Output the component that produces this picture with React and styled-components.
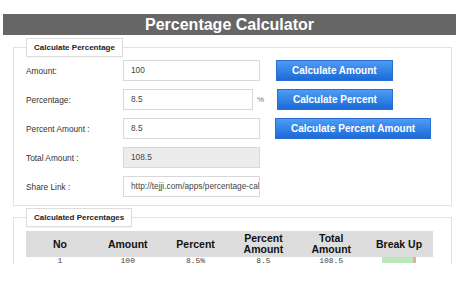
import React from 'react';
import styled, { createGlobalStyle } from 'styled-components';

const GlobalStyle = createGlobalStyle`
  body {
    margin: 0;
    background: #fff;
    font-family: "Liberation Sans", Arial, sans-serif;
  }
`;

const Page = styled.div`
  width: 459px;
  height: 264px;
  overflow: hidden;
  padding-top: 14px;
  box-sizing: border-box;
`;

const TitleBar = styled.h1`
  margin: 0 3px;
  height: 21px;
  background: #666;
  color: #fff;
  font-size: 16px;
  font-weight: bold;
  line-height: 21px;
  text-align: center;
`;

const Box = styled.fieldset`
  margin: ${p => p.$top}px 7px 0 13px;
  padding: 2px 12px ${p => p.$bottom}px;
  border: 1px solid #e2e2e2;
  min-width: 0;
`;

const Legend = styled.legend`
  padding: 0 7px;
  height: 17px;
  line-height: 17px;
  border: 1px solid #ddd;
  background: #fff;
  font-size: 8px;
  font-weight: bold;
  color: #222;
  box-shadow: 0 1px 1px rgba(0, 0, 0, 0.04);
`;

const Form = styled.div`
  display: grid;
  grid-template-columns: 97px 153px auto;
  row-gap: 8px;
  align-items: center;
  padding-top: 1px;
`;

const Label = styled.label`
  font-size: 8.3px;
  color: #333;
`;

const Field = styled.div`
  display: flex;
  align-items: center;
  gap: 4px;
`;

const Input = styled.div`
  box-sizing: border-box;
  width: ${p => p.$width || 137}px;
  height: 21px;
  line-height: 19px;
  padding: 0 7px;
  border: 1px solid #d8d8d8;
  background: ${p => (p.$readOnly ? '#ececec' : '#fff')};
  font-size: 8.3px;
  color: #444;
  white-space: nowrap;
  overflow: hidden;
`;

const Unit = styled.span`
  font-size: 8px;
  color: #777;
`;

const Button = styled.button`
  justify-self: start;
  height: 21px;
  padding: 0 15px;
  border: 1px solid #2a6fd0;
  background: linear-gradient(#4d9cf4, #1b6ad8);
  color: #fff;
  font-family: "Liberation Sans", Arial, sans-serif;
  font-size: 10px;
  font-weight: bold;
  margin-left: ${p => p.$shift || 0}px;
`;

const Table = styled.table`
  width: 407px;
  margin-top: 2px;
  border-collapse: collapse;
  table-layout: fixed;
`;

const Head = styled.th`
  height: 26px;
  padding: 0;
  background: #dddddd;
  font-size: 10.5px;
  font-weight: bold;
  line-height: 11px;
  color: #111;
  text-align: center;
`;

const Cell = styled.td`
  height: 8px;
  padding: 0;
  font-family: "Liberation Mono", "Courier New", monospace;
  font-size: 8px;
  line-height: 7px;
  color: #444;
  text-align: center;
  vertical-align: top;
`;

const Bar = styled.div`
  display: flex;
  width: 34px;
  height: 6px;
  margin: 0 auto;
`;

const BarPart = styled.div`
  background: ${p => p.$color};
`;

const rows = [
  { label: 'Amount:', value: '100', button: 'Calculate Amount' },
  { label: 'Percentage:', value: '8.5', width: 130, unit: '%', button: 'Calculate Percent', shift: 1 },
  { label: 'Percent Amount :', value: '8.5', button: 'Calculate Percent Amount', shift: -1 },
  { label: 'Total Amount :', value: '108.5', readOnly: true },
  { label: 'Share Link :', value: 'http://tejji.com/apps/percentage-calculator' },
];

const App = () => {
  const amount = 100;
  const total = 108.5;
  const share = (amount / total) * 100;

  return (
    <Page>
      <GlobalStyle />
      <TitleBar>Percentage Calculator</TitleBar>

      <Box $top={3} $bottom={8}>
        <Legend>Calculate Percentage</Legend>
        <Form>
          {rows.map(r => (
            <React.Fragment key={r.label}>
              <Label>{r.label}</Label>
              <Field>
                <Input $width={r.width} $readOnly={r.readOnly}>{r.value}</Input>
                {r.unit && <Unit>{r.unit}</Unit>}
              </Field>
              {r.button ? <Button $shift={r.shift}>{r.button}</Button> : <span />}
            </React.Fragment>
          ))}
        </Form>
      </Box>

      <Box $top={2} $bottom={8}>
        <Legend>Calculated Percentages</Legend>
        <Table>
          <thead>
            <tr>
              <Head>No</Head>
              <Head>Amount</Head>
              <Head>Percent</Head>
              <Head>Percent<br />Amount</Head>
              <Head>Total<br />Amount</Head>
              <Head>Break Up</Head>
            </tr>
          </thead>
          <tbody>
            <tr>
              <Cell>1</Cell>
              <Cell>100</Cell>
              <Cell>8.5%</Cell>
              <Cell>8.5</Cell>
              <Cell>108.5</Cell>
              <Cell>
                <Bar>
                  <BarPart $color="#b9e8b9" style={{ width: `${share}%` }} />
                  <BarPart $color="#f2a3a3" style={{ width: `${100 - share}%` }} />
                </Bar>
              </Cell>
            </tr>
          </tbody>
        </Table>
      </Box>
    </Page>
  );
};

export default App;
